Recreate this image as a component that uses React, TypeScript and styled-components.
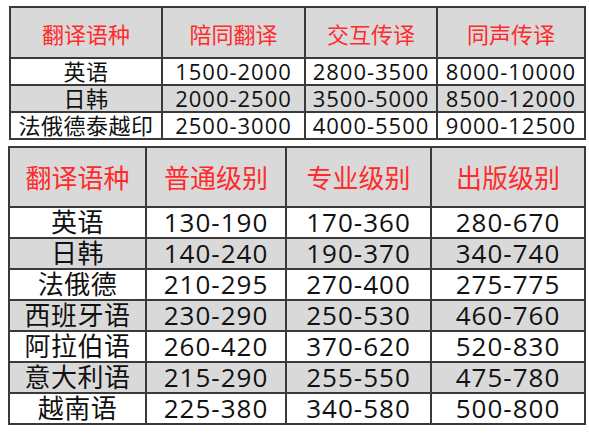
import styled, { createGlobalStyle } from 'styled-components';

const GlobalStyle = createGlobalStyle`
  html, body {
    margin: 0;
    padding: 0;
    background: #fff;
  }
  body {
    font-family: 'Open Sans', 'Noto Sans CJK SC', sans-serif;
    color: #111;
  }
`;

const Page = styled.div`
  display: flex;
  flex-direction: column;
  gap: 6px;
  width: 589px;
  height: 435px;
  padding: 6px 5px 0 8px;
  box-sizing: border-box;
`;

const Table = styled.table<{ $size: number; $indent: number }>`
  border-collapse: collapse;
  table-layout: fixed;
  margin-left: ${(p) => p.$indent}px;
  width: calc(100% - ${(p) => p.$indent}px);
  font-size: ${(p) => p.$size}px;
  border: 2px solid #555;
`;

const Head = styled.th<{ $h: number }>`
  height: ${(p) => p.$h}px;
  padding: 0;
  background: #d9d9d9;
  color: #ff2b2b;
  font-weight: 400;
  text-align: center;
  border: 2px solid #3a3a3a;
`;

const Cell = styled.td<{ $h: number; $shade: boolean; $num: boolean }>`
  height: ${(p) => p.$h}px;
  padding: 0;
  line-height: 1.05;
  text-align: center;
  white-space: nowrap;
  letter-spacing: ${(p) => (p.$num ? '1px' : '0.5px')};
  background: ${(p) => (p.$shade ? '#d9d9d9' : '#fff')};
  border: 2px solid #3a3a3a;
`;

const priceHead = ['翻译语种', '陪同翻译', '交互传译', '同声传译'];
const priceRows = [
  ['英语', '1500-2000', '2800-3500', '8000-10000'],
  ['日韩', '2000-2500', '3500-5000', '8500-12000'],
  ['法俄德泰越印', '2500-3000', '4000-5500', '9000-12500'],
];
const priceCols = [152, 143, 132, 148];

const levelHead = ['翻译语种', '普通级别', '专业级别', '出版级别'];
const levelRows = [
  ['英语', '130-190', '170-360', '280-670'],
  ['日韩', '140-240', '190-370', '340-740'],
  ['法俄德', '210-295', '270-400', '275-775'],
  ['西班牙语', '230-290', '250-530', '460-760'],
  ['阿拉伯语', '260-420', '370-620', '520-830'],
  ['意大利语', '215-290', '255-550', '475-780'],
  ['越南语', '225-380', '340-580', '500-800'],
];
const levelCols = [137, 140, 145, 154];

type GridProps = {
  head: string[];
  rows: string[][];
  cols: number[];
  size: number;
  indent: number;
  headH: number;
  rowH: number;
};

function Grid({ head, rows, cols, size, indent, headH, rowH }: GridProps) {
  return (
    <Table $size={size} $indent={indent}>
      <colgroup>
        {cols.map((w, i) => (
          <col key={i} style={{ width: w }} />
        ))}
      </colgroup>
      <thead>
        <tr>
          {head.map((h) => (
            <Head key={h} $h={headH}>
              {h}
            </Head>
          ))}
        </tr>
      </thead>
      <tbody>
        {rows.map((r, i) => (
          <tr key={r[0]}>
            {r.map((c, j) => (
              <Cell key={j} $h={rowH} $shade={i % 2 === 1} $num={j > 0}>
                {c}
              </Cell>
            ))}
          </tr>
        ))}
      </tbody>
    </Table>
  );
}

export default function App() {
  return (
    <>
      <GlobalStyle />
      <Page>
        <Grid head={priceHead} rows={priceRows} cols={priceCols} size={22} indent={1} headH={49} rowH={25} />
        <Grid head={levelHead} rows={levelRows} cols={levelCols} size={26} indent={0} headH={58} rowH={29} />
      </Page>
    </>
  );
}
